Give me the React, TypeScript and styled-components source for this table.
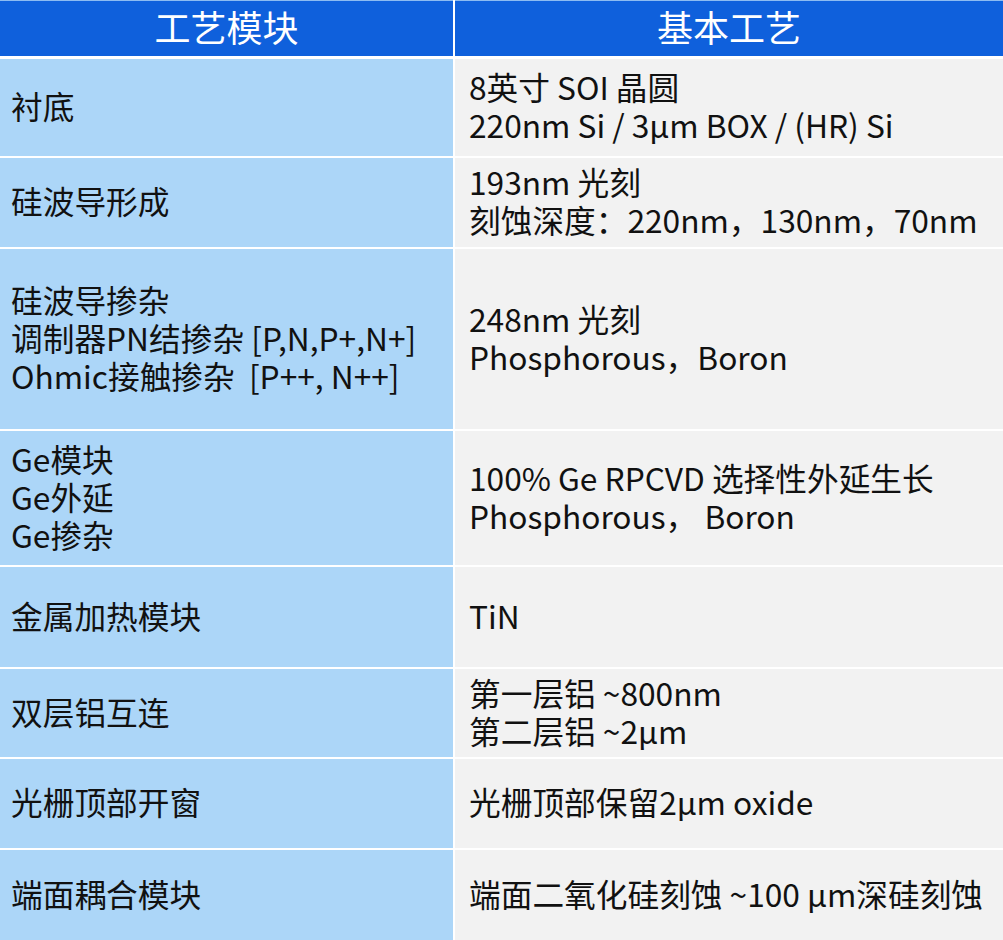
import styled, { createGlobalStyle } from 'styled-components';

const GlobalStyle = createGlobalStyle`
    html, body {
        margin: 0;
        padding: 0;
        background: #ffffff;
    }
    body {
        font-family: "Noto Sans CJK SC", "Noto Sans", sans-serif;
    }
`;

const Table = styled.div`
    display: grid;
    grid-template-columns: 453px 1fr;
    column-gap: 2px;
    width: 1003px;
    background: #ffffff;
`;

const HeadCell = styled.div`
    box-sizing: border-box;
    height: 56px;
    padding-bottom: 4px;
    border-top: 1px solid #8dbcf2;
    margin-bottom: 3px;
    background: #0f60dc;
    color: #ffffff;
    font-size: 36px;
    line-height: 51px;
    text-align: center;
`;

const Cell = styled.div<{ $h: number; $side: 'left' | 'right' }>`
    box-sizing: border-box;
    height: ${(p) => p.$h}px;
    margin-bottom: 2px;
    display: flex;
    flex-direction: column;
    justify-content: center;
    padding-left: ${(p) => (p.$side === 'left' ? 11 : 14)}px;
    padding-bottom: 5px;
    background: ${(p) => (p.$side === 'left' ? '#acd6f8' : '#f2f2f2')};
    color: #111111;
    font-size: 31.7px;
    line-height: 38px;
    white-space: nowrap;
    &:nth-last-child(-n + 2) {
        margin-bottom: 0;
    }
`;

const Line = styled.div`
    white-space: pre;
`;

const rows: { h: number; left: string[]; right: string[] }[] = [
    { h: 97, left: ['衬底'], right: ['8英寸 SOI 晶圆', '220nm Si / 3µm BOX / (HR) Si'] },
    { h: 89, left: ['硅波导形成'], right: ['193nm 光刻', '刻蚀深度：220nm，130nm，70nm'] },
    {
        h: 180,
        left: ['硅波导掺杂', '调制器PN结掺杂 [P,N,P+,N+]', 'Ohmic接触掺杂  [P++, N++]'],
        right: ['248nm 光刻', 'Phosphorous，Boron'],
    },
    { h: 134, left: ['Ge模块', 'Ge外延', 'Ge掺杂'], right: ['100% Ge RPCVD 选择性外延生长', 'Phosphorous， Boron'] },
    { h: 100, left: ['金属加热模块'], right: ['TiN'] },
    { h: 88, left: ['双层铝互连'], right: ['第一层铝 ~800nm', '第二层铝 ~2µm'] },
    { h: 89, left: ['光栅顶部开窗'], right: ['光栅顶部保留2µm oxide'] },
    { h: 90, left: ['端面耦合模块'], right: ['端面二氧化硅刻蚀 ~100 µm深硅刻蚀'] },
];

export default function App() {
    return (
        <>
            <GlobalStyle />
            <Table>
                <HeadCell>工艺模块</HeadCell>
                <HeadCell>基本工艺</HeadCell>
                {rows.map((r, i) => [
                    <Cell key={`l${i}`} $h={r.h} $side="left">
                        {r.left.map((t) => <Line key={t}>{t}</Line>)}
                    </Cell>,
                    <Cell key={`r${i}`} $h={r.h} $side="right">
                        {r.right.map((t) => <Line key={t}>{t}</Line>)}
                    </Cell>,
                ])}
            </Table>
        </>
    );
}
